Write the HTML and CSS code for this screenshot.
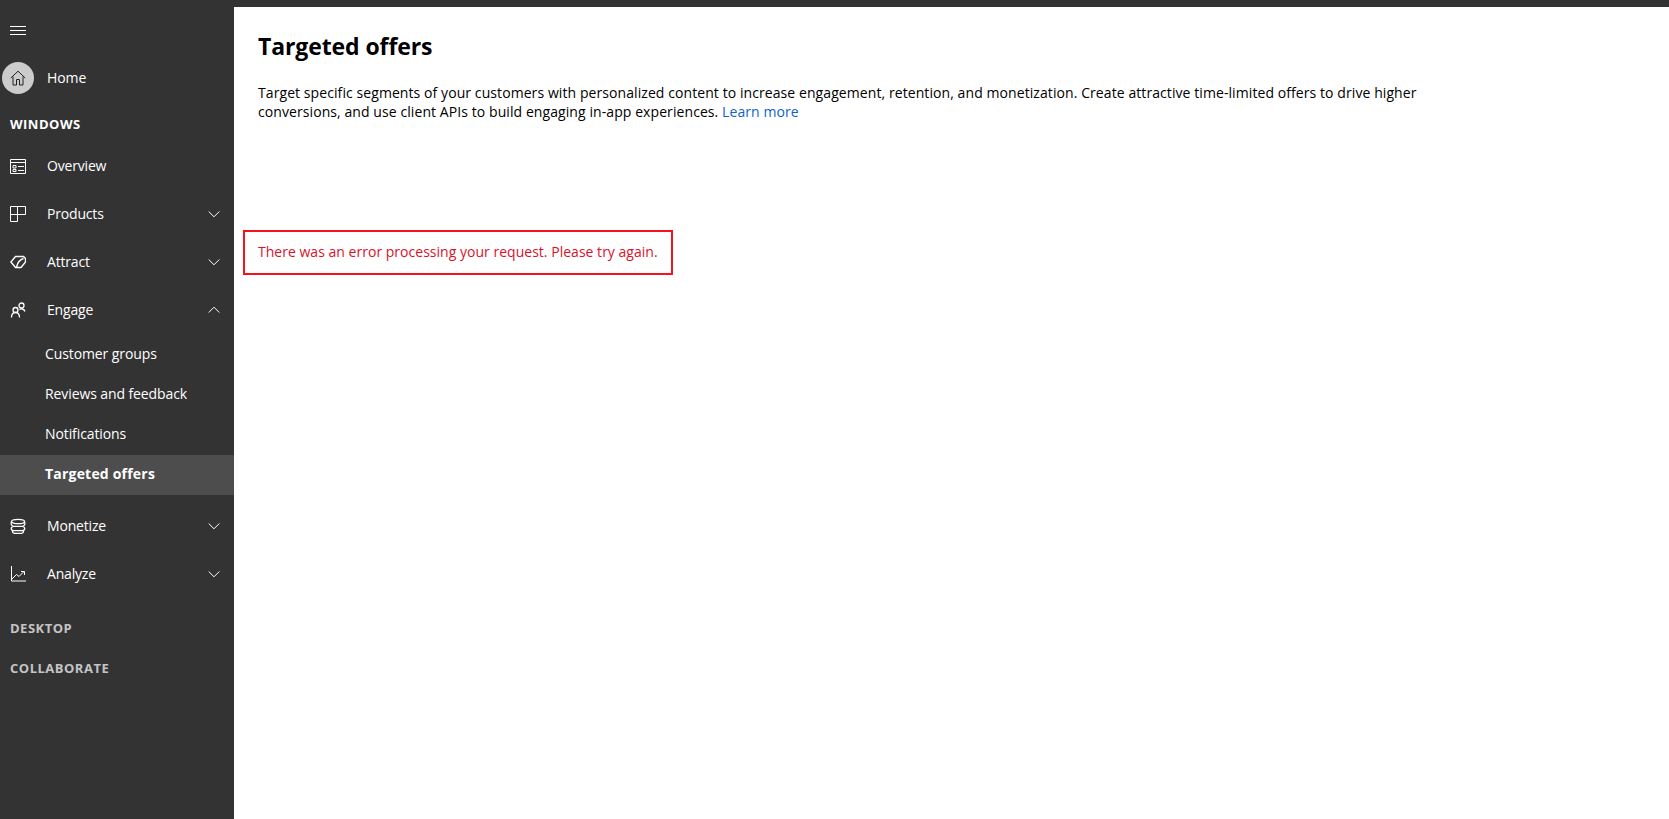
FILE: index.html
```html
<!DOCTYPE html>
<html lang="en">
<head>
<meta charset="utf-8">
<title>Targeted offers</title>
<link rel="stylesheet" href="styles.css">
</head>
<body>
<div class="app">
  <nav class="sidebar">
    <div class="menu-row">
      <svg class="icon" width="16" height="16" viewBox="0 0 16 16"><path d="M0 4.500h16M0 8.500h16M0 12.500h16" stroke="#fff" fill="none"/></svg>
    </div>
    <div class="home-row">
      <span class="home-circle">
        <svg width="16" height="16" viewBox="0 0 16 16"><path d="M.8 8 8 1.200 15.200 8M3 6.500v8.500h3.500V9.500h3V15H13V6.500" stroke="#222" fill="none"/></svg>
      </span>
      <span class="home-label">Home</span>
    </div>
    <div class="section first">WINDOWS</div>
    <div class="item">
      <svg class="icon" width="16" height="16" viewBox="0 0 16 16"><path d="M.5 1.500h15v14H.5zM.5 4.500h15M3 7.500h3v2.500H3zM3 11.500h3v2H3zM8 8.500h6M8 12.500h6" stroke="#fff" fill="none"/></svg>
      <span class="label">Overview</span>
    </div>
    <div class="item">
      <svg class="icon" width="16" height="16" viewBox="0 0 16 16"><path d="M.5.500h7v15h-7zM.5 8.500h7M7.500.500h8v8h-8" stroke="#fff" fill="none"/></svg>
      <span class="label">Products</span>
      <svg class="chevron" width="12" height="12" viewBox="0 0 12 12"><path d="M.7 3.500 6 8.800l5.300-5.300" stroke="#fff" fill="none"/></svg>
    </div>
    <div class="item">
      <svg class="icon" width="16" height="16" viewBox="0 0 16 16"><path d="M5.500 2.500h8l2 2v3.500l-4.500 5.500H5.500L.9 8zM6.500 13c1-4 3.500-7.500 7-8.500" stroke="#fff" stroke-width="1.400" fill="none"/></svg>
      <span class="label">Attract</span>
      <svg class="chevron" width="12" height="12" viewBox="0 0 12 12"><path d="M.7 3.500 6 8.800l5.300-5.300" stroke="#fff" fill="none"/></svg>
    </div>
    <div class="item">
      <svg class="icon" width="16" height="16" viewBox="0 0 16 16"><circle cx="5.500" cy="8" r="2.500" stroke="#fff" stroke-width="1.300" fill="none"/><path d="M1.500 15.500c0-3 1.500-5 4-5s4 2 4 5" stroke="#fff" stroke-width="1.300" fill="none"/><circle cx="11.500" cy="3.500" r="2.500" stroke="#fff" stroke-width="1.300" fill="none"/><path d="M9.500 7.500c1.500-1 4.500-1 5.500 2" stroke="#fff" stroke-width="1.300" fill="none"/></svg>
      <span class="label">Engage</span>
      <svg class="chevron" width="12" height="12" viewBox="0 0 12 12"><path d="M.7 8.500 6 3.200l5.300 5.300" stroke="#fff" fill="none"/></svg>
    </div>
    <div class="sub first-sub">Customer groups</div>
    <div class="sub">Reviews and feedback</div>
    <div class="sub">Notifications</div>
    <div class="sub active">Targeted offers</div>
    <div class="item after-sub">
      <svg class="icon" width="16" height="16" viewBox="0 0 16 16"><ellipse cx="8" cy="3.500" rx="6.500" ry="2.200" stroke="#fff" stroke-width="1.300" fill="none"/><path d="M1.500 3.500c-1 2.500 0 4.500 2 4.800h9c2-.3 3-2.300 2-4.800M3.500 8.300c-3 .5-3 3.900 0 4.300h9c3-.4 3-3.800 0-4.300M3.500 12.600c-1.500.4-1.500 2.400 1 2.700h7c2.500-.3 2.500-2.300 1-2.700" stroke="#fff" stroke-width="1.300" fill="none"/></svg>
      <span class="label">Monetize</span>
      <svg class="chevron" width="12" height="12" viewBox="0 0 12 12"><path d="M.7 3.500 6 8.800l5.300-5.300" stroke="#fff" fill="none"/></svg>
    </div>
    <div class="item">
      <svg class="icon" width="16" height="16" viewBox="0 0 16 16"><path d="M1.500 0v15h14.500M2 13l4.500-4.500 2.500 2 5-5M11 5.500h3.500V9" stroke="#fff" fill="none"/></svg>
      <span class="label">Analyze</span>
      <svg class="chevron" width="12" height="12" viewBox="0 0 12 12"><path d="M.7 3.500 6 8.800l5.300-5.300" stroke="#fff" fill="none"/></svg>
    </div>
    <div class="section muted spaced">DESKTOP</div>
    <div class="section muted">COLLABORATE</div>
  </nav>
  <main class="main">
    <h1 class="title">Targeted offers</h1>
    <p class="intro">Target specific segments of your customers with personalized content to increase engagement, retention, and monetization. Create attractive time-limited offers to drive higher conversions, and use client APIs to build engaging in-app experiences. <a class="link" href="#">Learn more</a></p>
    <div class="error">There was an error processing your request. Please try again.</div>
  </main>
</div>
</body>
</html>
```
FILE: styles.css
```css
* { box-sizing: border-box; }
html, body { margin: 0; height: 100%; overflow: hidden; }
body {
  font-family: "Open Sans", "Noto Sans", "Liberation Sans", sans-serif;
  background: #333;
  color: #fff;
  font-size: 14px;
}
.app { display: flex; height: 100%; padding-top: 7px; }
.sidebar { width: 234px; flex: none; background: #333; }
.menu-row { height: 46px; display: flex; align-items: center; padding-left: 10px; }
.icon { flex: none; display: block; }
.home-row { height: 48px; margin-top: 1px; display: flex; align-items: center; padding-left: 2px; }
.home-circle { width: 32px; height: 32px; border-radius: 50%; background: #ccc; display: flex; align-items: center; justify-content: center; margin-right: 13px; }
.home-label { padding-bottom: 2px; letter-spacing: -.1px; }
.section { height: 40px; display: flex; align-items: center; padding-left: 10px; font-size: 13px; font-weight: 700; letter-spacing: .5px; }
.section.first { margin-top: 2px; margin-bottom: -2px; }
.section.muted { color: #c4c4c4; }
.section.spaced { margin-top: 10px; }
.item { height: 48px; display: flex; align-items: center; padding-left: 10px; }
.label { margin-left: 21px; padding-bottom: 2px; flex: 1; letter-spacing: -.18px; }
.chevron { margin-right: 14px; flex: none; }
.sub { height: 40px; display: flex; align-items: center; padding: 0 0 4px 45px; letter-spacing: -.1px; }
.first-sub { margin-top: 1px; }
.sub.active { font-weight: 700; background: #4d4d4d; letter-spacing: .2px; }
.after-sub { margin-top: 7px; }
.main { flex: 1; background: #fff; color: #000; padding: 0 24px; }
.title { margin: 21px 0 0; font-size: 23px; line-height: 36px; font-weight: 700; letter-spacing: -.1px; }
.intro { margin: 19px 0 0; width: 1190px; font-size: 14px; line-height: 19px; letter-spacing: .08px; }
.link { display: inline-block; color: #0f62c8; text-decoration: none; }
.error {
  margin: 109px 0 0 -15px;
  width: 430px;
  height: 45px;
  border: 2px solid #f5141e;
  display: flex;
  align-items: center;
  padding: 0 0 2px 13px;
  color: #d9112a;
  letter-spacing: .02px;
}
```
